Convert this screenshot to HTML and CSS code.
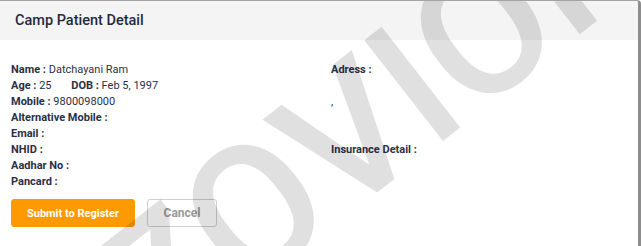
FILE: index.html
```html
<html>
<head>
<link rel="stylesheet" href="styles.css">
</head>
<body>
<div class="modal">
  <div class="modal-header">Camp Patient Detail</div>
  <div class="modal-body">
    <div class="detail-grid">
      <div class="col">
        <div class="row"><b>Name :</b> Datchayani Ram</div>
        <div class="row"><b>Age :</b> 25 <span class="dob"><b>DOB :</b> Feb 5, 1997</span></div>
        <div class="row"><b>Mobile :</b> 9800098000</div>
        <div class="row"><b>Alternative Mobile :</b></div>
        <div class="row"><b>Email :</b></div>
        <div class="row"><b>NHID :</b></div>
        <div class="row"><b>Aadhar No :</b></div>
        <div class="row"><b>Pancard :</b></div>
      </div>
      <div class="col">
        <div class="row"><b>Adress :</b></div>
        <div class="row"></div>
        <div class="row">,</div>
        <div class="row"></div>
        <div class="row"></div>
        <div class="row"><b>Insurance Detail :</b></div>
      </div>
    </div>
    <div class="actions">
      <button class="btn btn-submit" type="button">Submit to Register</button>
      <button class="btn btn-cancel" type="button">Cancel</button>
    </div>
  </div>
  <svg class="watermark" width="641" height="246" viewBox="0 0 641 246">
    <text x="160" y="362" transform="rotate(-38 160 362)">ZOVION</text>
  </svg>
</div>
</body>
</html>
```

FILE: styles.css
```css
body{
  margin: 0;
  background-color: #fff;
  font-family: Roboto, "Liberation Sans", sans-serif;
  color: #2b3046;
}
.modal{
  position: relative;
  width: 638px;
  height: 245px;
  border-top: 1px solid #a3a3a3;
  border-right: 3px solid #8d8d8d;
  border-top-right-radius: 4px;
  overflow: hidden;
  background-color: #fff;
}
.modal-header{
  background-color: #f4f4f4;
  height: 39px;
  padding-left: 15px;
  line-height: 40px;
  font-size: 14.5px;
  font-weight: 500;
  color: #1f2b3d;
}
.modal-body{
  padding: 22px 0 0 11px;
}
.detail-grid{
  display: grid;
  grid-template-columns: 320px 1fr;
}
.row{
  height: 16px;
  line-height: 16px;
  font-size: 11px;
}
.row b{
  font-weight: 700;
}
.dob{
  margin-left: 17px;
}
.actions{
  display: flex;
  gap: 12px;
  margin-top: 9px;
}
.btn{
  height: 28px;
  border-radius: 3px;
  font-family: Roboto, "Liberation Sans", sans-serif;
  font-size: 11px;
  font-weight: 700;
  cursor: pointer;
}
.btn-submit{
  width: 124px;
  background-color: #ff9900;
  border: 1px solid #ff9900;
  color: #fff;
}
.btn-cancel{
  width: 70px;
  background-color: #fff;
  border: 1px solid #cfcfcf;
  color: #9a9a9a;
  font-size: 12px;
}
.watermark{
  position: absolute;
  left: 0;
  top: -1px;
  pointer-events: none;
}
.watermark text{
  font-family: Roboto, sans-serif;
  font-size: 180px;
  font-weight: 500;
  fill: rgba(0, 0, 0, 0.12);
}
```
